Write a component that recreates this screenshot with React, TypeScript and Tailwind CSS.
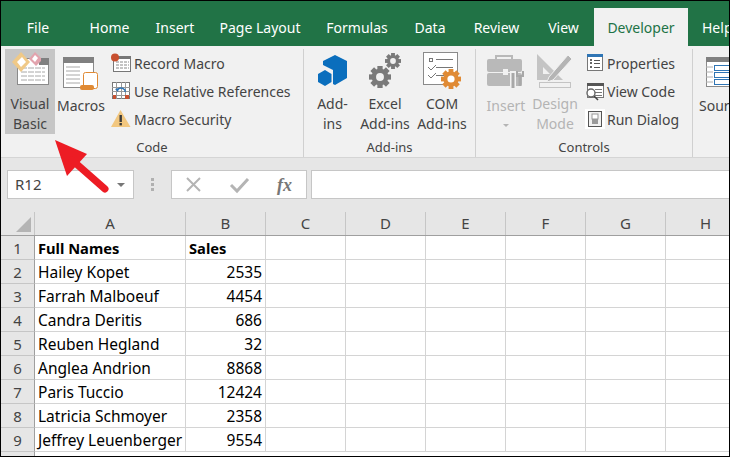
import React from "react";

const tabs = [
  { label: "File", width: "w-[74px]" },
  { label: "Home", width: "w-[69px]" },
  { label: "Insert", width: "w-[62px]" },
  { label: "Page Layout", width: "w-[108px]" },
  { label: "Formulas", width: "w-[86px]" },
  { label: "Data", width: "w-[60px]" },
  { label: "Review", width: "w-[73px]" },
  { label: "View", width: "w-[61px]" },
];

const rows: [string, string][] = [
  ["Hailey Kopet", "2535"],
  ["Farrah Malboeuf", "4454"],
  ["Candra Deritis", "686"],
  ["Reuben Hegland", "32"],
  ["Anglea Andrion", "8868"],
  ["Paris Tuccio", "12424"],
  ["Latricia Schmoyer", "2358"],
  ["Jeffrey Leuenberger", "9554"],
];

const columns = ["C", "D", "E", "F", "G", "H"];

const Gear = ({ cx, cy, r, color, hole }: { cx: number; cy: number; r: number; color: string; hole: string }) => (
  <g>
    {[0, 45, 90, 135, 180, 225, 270, 315].map((a) => (
      <rect key={a} x={cx - r * 0.24} y={cy - r} width={r * 0.48} height={r * 0.5} fill={color} transform={`rotate(${a} ${cx} ${cy})`} />
    ))}
    <circle cx={cx} cy={cy} r={r * 0.76} fill={color} />
    <circle cx={cx} cy={cy} r={r * 0.36} fill={hole} />
  </g>
);

const VisualBasicIcon = () => (
  <svg className="overflow-visible" width="38" height="36" viewBox="-1 1 38 36">
    <rect x="5.5" y="6.5" width="31" height="26" fill="#fff" stroke="#8a8a8a" />
    <rect x="27" y="6" width="10" height="7" fill="#808080" />
    {[16, 20, 24, 28].map((y) => (
      <line key={y} x1="9" x2="33" y1={y} y2={y} stroke="#a8a8a8" strokeDasharray="6 1" />
    ))}
    <path d="M9 0 L18 10 L9 20 L0 10 Z" fill="#f0c987" />
    <path d="M10 5 L14 10 L9 15 L5 10 Z" fill="#fff" />
    <path d="M23 0 L29 6 L29 9 L24 14 L17 7 Z" fill="#e2a3ad" />
    <path d="M23 3 L26 6 L23 10 L20 7 Z" fill="#fff" />
  </svg>
);

const MacrosIcon = () => (
  <svg className="overflow-visible" width="38" height="36" viewBox="0 -2 38 36">
    <rect x="1.5" y="1.5" width="30" height="30" fill="#fff" stroke="#8a8a8a" />
    <rect x="1" y="1" width="31" height="6" fill="#808080" />
    {[11, 15, 19, 23, 27].map((y) => (
      <line key={y} x1="4" x2="18" y1={y} y2={y} stroke="#a8a8a8" />
    ))}
    <rect x="21.5" y="16.5" width="14" height="16" rx="2" fill="#fff" stroke="#e08a34" />
    <rect x="18" y="29" width="14" height="5" rx="2" fill="#e08a34" />
  </svg>
);

const RecordIcon = () => (
  <svg width="22" height="20" viewBox="0 0 22 20">
    <rect x="3.5" y="3.5" width="17" height="15" fill="#fff" stroke="#777" />
    <rect x="3" y="3" width="18" height="3" fill="#777" />
    {[9, 12, 15].map((y) => (
      <line key={y} x1="6" x2="19" y1={y} y2={y} stroke="#888" strokeDasharray="3 1" />
    ))}
    <circle cx="5" cy="4.5" r="4" fill="#c8502f" />
  </svg>
);

const RelativeIcon = () => (
  <svg width="22" height="20" viewBox="0 0 22 20">
    <rect x="2.5" y="1.5" width="17" height="16" fill="#fff" stroke="#777" />
    {[6, 11, 15].map((x) => (
      <line key={x} x1={x + 0.5} x2={x + 0.5} y1="1" y2="18" stroke="#999" />
    ))}
    {[6, 10, 14].map((y) => (
      <line key={y} x1="2" x2="20" y1={y + 0.5} y2={y + 0.5} stroke="#999" />
    ))}
    <path d="M7 9 Q11 5 15 9 L15 11" fill="none" stroke="#2f75b5" strokeWidth="1.5" />
    <path d="M5 8 L9 7 L8 11 Z" fill="#2f75b5" />
    <rect x="3" y="14" width="3" height="4" fill="#c8502f" />
    <rect x="15" y="14" width="4" height="4" fill="#c8502f" />
  </svg>
);

const SecurityIcon = () => (
  <svg width="22" height="20" viewBox="0 0 22 20">
    <path d="M10.5 1 L20.5 18 L1 18 Z" fill="#f2c77f" />
    <rect x="9.5" y="6" width="2.4" height="7" fill="#3a3a3a" />
    <rect x="9.5" y="14" width="2.4" height="2.4" fill="#3a3a3a" />
  </svg>
);

const AddInsIcon = () => (
  <svg width="32" height="32" viewBox="0 0 32 32">
    <path d="M18 0 L30 6 L30 23 L18 30 L16 29 L16 15 L6 10 L6 6 Z" fill="#0a6ebd" />
    <path d="M8 15 L14.5 19 L14.5 27 L8 31 L1 27 L1 19 Z" fill="#0a6ebd" />
  </svg>
);

const ExcelAddInsIcon = () => (
  <svg width="34" height="36" viewBox="0 0 34 36">
    <Gear cx={25} cy={8} r={8} color="#7a7a7a" hole="#f1f1f1" />
    <Gear cx={12} cy={24} r={11} color="#7a7a7a" hole="#f1f1f1" />
  </svg>
);

const ComIcon = () => (
  <svg width="40" height="38" viewBox="0 0 40 38">
    <rect x="1.5" y="0.5" width="34" height="32" fill="#fff" stroke="#8a8a8a" />
    <rect x="7.5" y="6.5" width="3" height="3" fill="none" stroke="#777" />
    <line x1="14" x2="31" y1="7.5" y2="7.5" stroke="#777" />
    <path d="M6 15 L9 18 L14 13" fill="none" stroke="#777" />
    <line x1="14" x2="31" y1="15.5" y2="15.5" stroke="#777" />
    <path d="M6 23 L9 26 L14 21" fill="none" stroke="#777" />
    <line x1="14" x2="22" y1="23.5" y2="23.5" stroke="#777" />
    <Gear cx={29} cy={27} r={10} color="#e08a34" hole="#fff" />
  </svg>
);

const ToolboxIcon = () => (
  <svg width="38" height="36" viewBox="0 0 38 36">
    <path d="M9 6 V2 H25 V6" fill="none" stroke="#b9b9b9" strokeWidth="2" />
    <rect x="0" y="5" width="35" height="13" rx="2" fill="#b9b9b9" />
    <rect x="0" y="19" width="35" height="13" rx="2" fill="#b9b9b9" />
    <rect x="16" y="15" width="5" height="6" fill="#f1f1f1" />
    <path d="M26 17 V34" stroke="#f1f1f1" strokeWidth="6" />
    <path d="M26 19 V34" stroke="#a8a8a8" strokeWidth="3" />
    <path d="M33 22 V32" stroke="#a8a8a8" strokeWidth="3" />
    <path d="M30 17 V22 H36 V17" fill="none" stroke="#a8a8a8" strokeWidth="2" />
  </svg>
);

const DesignIcon = () => (
  <svg width="38" height="36" viewBox="0 0 38 36">
    <path d="M1 1 L27 27 H1 Z M7 14 V21 H14 Z" fill="#c4c4c4" fillRule="evenodd" />
    <path d="M13 24 L32 2 L36 6 L17 27 L11 29 Z" fill="#b4b4b4" stroke="#f1f1f1" />
    <rect x="3.5" y="29.5" width="31" height="5" fill="#f1f1f1" stroke="#c4c4c4" />
  </svg>
);

const PropertiesIcon = () => (
  <svg width="20" height="20" viewBox="0 0 20 20">
    <rect x="2.5" y="1.5" width="15" height="16" fill="#fff" stroke="#777" />
    <rect x="2" y="1" width="16" height="3" fill="#2f75b5" />
    {[7, 10, 14].map((y) => (
      <g key={y}>
        <rect x="5" y={y - 1} width="2" height="2" fill="#666" />
        <line x1="9" x2="15" y1={y + 0.5} y2={y + 0.5} stroke="#555" />
      </g>
    ))}
  </svg>
);

const ViewCodeIcon = () => (
  <svg width="20" height="20" viewBox="0 0 20 20">
    <rect x="2.5" y="2.5" width="16" height="14" fill="#fff" stroke="#777" />
    <rect x="2" y="2" width="17" height="3" fill="#555" />
    {[8, 11, 14].map((y) => (
      <line key={y} x1="10" x2="17" y1={y + 0.5} y2={y + 0.5} stroke="#777" />
    ))}
    <circle cx="6" cy="12" r="4" fill="#fff" stroke="#666" strokeWidth="1.4" />
    <line x1="9" x2="13" y1="15" y2="19" stroke="#444" strokeWidth="1.6" />
  </svg>
);

const RunDialogIcon = () => (
  <svg width="20" height="20" viewBox="0 0 20 20">
    <rect x="0" y="0" width="20" height="20" fill="#fff" />
    <rect x="3.5" y="2.5" width="13" height="15" fill="#f1f1f1" stroke="#555" />
    <rect x="7" y="5" width="6" height="5" fill="#fff" stroke="#999" />
    <rect x="7" y="10" width="6" height="5" fill="#9a9a9a" />
  </svg>
);

const SourceIcon = () => (
  <svg className="ml-[6px]" width="26" height="32" viewBox="0 0 26 32">
    <rect x="1.5" y="1.5" width="30" height="29" fill="#fff" stroke="#8a8a8a" />
    <rect x="1" y="1" width="30" height="5" fill="#808080" />
    {[1, 2, 3, 4].map((i) => (
      <line key={i} x1="1" x2="8" y1={6 + i * 5} y2={6 + i * 5} stroke="#b0b0b0" />
    ))}
    {[9, 16, 23].map((y) => (
      <rect key={y} x="9.5" y={y + 0.5} width="15" height="5" fill="#fff" stroke="#2f75b5" />
    ))}
  </svg>
);

const SmallButton = ({ icon, label }: { icon: React.ReactNode; label: string }) => (
  <div className="flex h-7 items-center gap-[2px] whitespace-nowrap">
    {icon}
    <span>{label}</span>
  </div>
);

const BigButton = ({ icon, children, className }: { icon: React.ReactNode; children: React.ReactNode; className: string }) => (
  <div className={`flex shrink-0 flex-col items-center ${className}`}>
    <div className="flex h-[46px] items-center justify-center">{icon}</div>
    <div className="mt-[1px] text-center leading-5 whitespace-nowrap">{children}</div>
  </div>
);

const GroupLabel = ({ label }: { label: string }) => (
  <div className="flex h-[23px] items-start justify-center pt-[3px] text-[13px] leading-5 text-[#444]">{label}</div>
);

export default function App() {
  return (
    <div className="relative h-[457px] w-[730px] overflow-hidden border border-black bg-white font-['Noto_Sans',sans-serif] text-[14px] text-[#444]">
      {/* tabs */}
      <div className="flex h-[45px] items-end bg-[#217346] text-[14px] text-white">
        {tabs.map((tab) => (
          <div key={tab.label} className={`flex h-[37px] shrink-0 items-center justify-center ${tab.width}`}>
            {tab.label}
          </div>
        ))}
        <div className="flex h-[38px] w-[94px] shrink-0 items-center justify-center bg-[#f1f1f1] text-[#217346]">Developer</div>
        <div className="flex h-[37px] shrink-0 items-center pl-[14px]">Help</div>
      </div>

      {/* ribbon */}
      <div className="flex h-[112px] border-b border-[#d5d5d5] bg-[#f1f1f1] pt-[3px]">
        <div className="flex w-[303px] shrink-0 flex-col border-r border-[#d0d0d0]">
          <div className="flex h-[85px] pl-[4px]">
            <BigButton icon={<VisualBasicIcon />} className="h-[85px] w-[50px] bg-[#c6c6c6]">
              Visual<br />Basic
            </BigButton>
            <BigButton icon={<MacrosIcon />} className="w-[52px]">Macros</BigButton>
            <div className="ml-[3px] flex flex-col">
              <SmallButton icon={<RecordIcon />} label="Record Macro" />
              <SmallButton icon={<RelativeIcon />} label="Use Relative References" />
              <SmallButton icon={<SecurityIcon />} label="Macro Security" />
            </div>
          </div>
          <GroupLabel label="Code" />
        </div>

        <div className="flex w-[172px] shrink-0 flex-col border-r border-[#d0d0d0]">
          <div className="flex h-[85px] pl-[4px]">
            <BigButton icon={<AddInsIcon />} className="w-[49px]">Add-<br />ins</BigButton>
            <BigButton icon={<ExcelAddInsIcon />} className="w-[56px]">Excel<br />Add-ins</BigButton>
            <BigButton icon={<ComIcon />} className="w-[58px]">COM<br />Add-ins</BigButton>
          </div>
          <GroupLabel label="Add-ins" />
        </div>

        <div className="flex w-[217px] shrink-0 flex-col border-r border-[#d0d0d0]">
          <div className="flex h-[85px] pl-[7px]">
            <BigButton icon={<ToolboxIcon />} className="w-[46px] text-[#b4b4b4]">
              Insert
              <div className="mx-auto mt-[8px] h-0 w-0 border-x-[3px] border-t-[3px] border-x-transparent border-t-[#b4b4b4]" />
            </BigButton>
            <BigButton icon={<DesignIcon />} className="w-[52px] text-[#b4b4b4]">Design<br />Mode</BigButton>
            <div className="ml-[4px] flex flex-col">
              <SmallButton icon={<PropertiesIcon />} label="Properties" />
              <SmallButton icon={<ViewCodeIcon />} label="View Code" />
              <SmallButton icon={<RunDialogIcon />} label="Run Dialog" />
            </div>
          </div>
          <GroupLabel label="Controls" />
        </div>

        <div className="flex flex-col pl-[6px]">
          <BigButton icon={<SourceIcon />} className="w-[40px] items-start">Source</BigButton>
        </div>
      </div>

      {/* formula bar */}
      <div className="flex h-[54px] bg-[#e6e6e6] pt-[12px] pl-[6px]">
        <div className="flex h-[29px] w-[127px] shrink-0 items-center justify-between border border-[#c6c6c6] bg-white pl-[7px] pr-[8px] text-[15px] text-[#444]">
          R12
          <div className="h-0 w-0 border-x-[4px] border-t-[4px] border-x-transparent border-t-[#777]" />
        </div>
        <div className="flex h-[29px] w-[37px] shrink-0 flex-col items-center justify-center gap-[2px]">
          <div className="h-[3px] w-[3px] bg-[#b0b0b0]" />
          <div className="h-[3px] w-[3px] bg-[#b0b0b0]" />
          <div className="h-[3px] w-[3px] bg-[#b0b0b0]" />
        </div>
        <div className="flex h-[29px] w-[136px] shrink-0 items-center border border-[#c6c6c6] bg-white">
          <svg width="134" height="27" viewBox="0 0 134 27">
            <path d="M15 7 L28 20 M28 7 L15 20" stroke="#b4b4b4" strokeWidth="2" fill="none" />
            <path d="M59 14 L65 20 L76 8" stroke="#b4b4b4" strokeWidth="3" fill="none" />
            <text x="105" y="20" fontFamily="Liberation Serif, serif" fontStyle="italic" fontWeight="700" fontSize="18" fill="#777">fx</text>
          </svg>
        </div>
        <div className="ml-[4px] h-[29px] flex-1 border-y border-l border-[#c6c6c6] bg-white" />
      </div>

      {/* column header */}
      <div className="grid h-[24px] grid-cols-[34px_151px_80px_80px_80px_80px_80px_80px_80px] border-b border-[#9f9f9f] bg-[#e6e6e6] text-[15px] text-[#444]">
        <div className="flex items-end justify-end border-r border-[#c6c6c6] pr-[3px] pb-[3px]">
          <div className="h-0 w-0 border-b-[15px] border-l-[15px] border-b-[#b4b4b4] border-l-transparent" />
        </div>
        {["A", "B", ...columns].map((c) => (
          <div key={c} className="flex items-center justify-center border-r border-[#c6c6c6]">{c}</div>
        ))}
      </div>

      {/* sheet */}
      <div className="grid auto-rows-[24px] grid-cols-[34px_151px_80px_80px_80px_80px_80px_80px_80px] text-[15.5px] text-black">
        <div className="flex items-center justify-center border-r border-b border-r-[#9f9f9f] border-b-[#c6c6c6] bg-[#e6e6e6] pt-[1px] text-[15px] text-[#444]">1</div>
        <div className="flex items-center border-r border-b border-[#d4d4d4] pt-[1px] pl-[3px] text-[14.7px] font-bold">Full Names</div>
        <div className="flex items-center border-r border-b border-[#d4d4d4] pt-[1px] pl-[3px] text-[14.7px] font-bold">Sales</div>
        {columns.map((c) => (
          <div key={c} className="border-r border-b border-[#d4d4d4]" />
        ))}
        {rows.map(([name, sales], i) => (
          <React.Fragment key={name}>
            <div className="flex items-center justify-center border-r border-b border-r-[#9f9f9f] border-b-[#c6c6c6] bg-[#e6e6e6] pt-[2px] text-[15px] text-[#444]">{i + 2}</div>
            <div className="flex items-center border-r border-b border-[#d4d4d4] pt-[2px] pl-[3px] whitespace-nowrap">{name}</div>
            <div className="flex items-center justify-end border-r border-b border-[#d4d4d4] pt-[2px] pr-[3px]">{sales}</div>
            {columns.map((c) => (
              <div key={c} className="border-r border-b border-[#d4d4d4]" />
            ))}
          </React.Fragment>
        ))}
        <div className="border-r border-r-[#9f9f9f] bg-[#e6e6e6]" />
      </div>

      {/* red arrow annotation */}
      <svg className="absolute top-[-1px] left-[-1px]" width="730" height="457" viewBox="0 0 730 457">
        <path d="M55 140 L87 154 L67 176 Z" fill="#ed1c24" />
        <line x1="72" y1="160" x2="105" y2="189" stroke="#ed1c24" strokeWidth="7" strokeLinecap="round" />
      </svg>
    </div>
  );
}
